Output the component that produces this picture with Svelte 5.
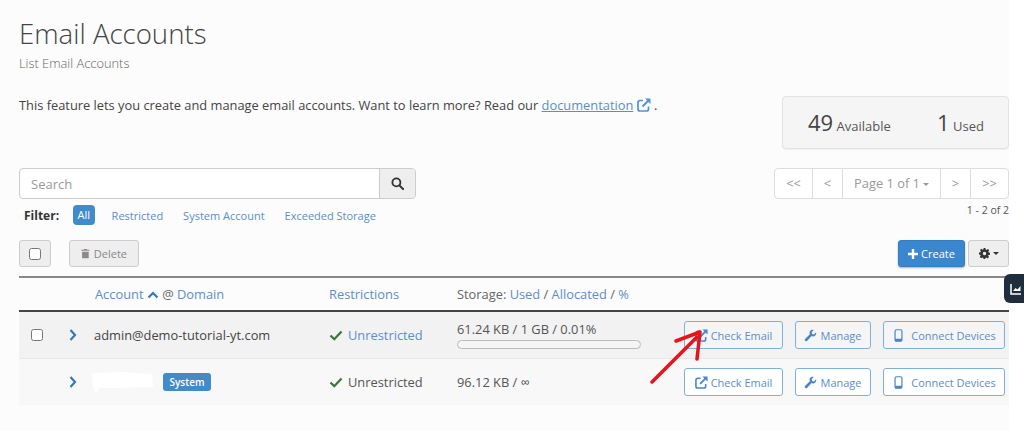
<script>
  const rows = [
    { email: 'admin@demo-tutorial-yt.com', selectable: true, link: true, usage: '61.24 KB / 1 GB / 0.01%', meter: true },
    { email: '', system: true, selectable: false, link: false, usage: '96.12 KB / ∞', meter: false }
  ]
  const filters = ['Restricted', 'System Account', 'Exceeded Storage']
</script>

{#snippet extIcon()}
  <svg class="ico" viewBox="0 0 14 14"><path d="M11.500 8.500v2.500a2 2 0 0 1-2 2H3a2 2 0 0 1-2-2V4.500a2 2 0 0 1 2-2h3" fill="none" stroke="currentColor" stroke-width="1.700"/><path d="M5.500 8.500L11.500 2.500" stroke="currentColor" stroke-width="2"/><path d="M8 .5h5.500V6z" fill="currentColor"/></svg>
{/snippet}
{#snippet wrench()}
  <svg class="ico" viewBox="0 0 14 14"><path d="M13 3.400c.5 1.800-.3 3.600-2 4.300-1 .4-2 .3-2.800-.1L3.500 12.600c-.7.700-1.700.7-2.300.1s-.6-1.600.1-2.300l5-4.700c-.4-.9-.5-1.900-.1-2.800C6.900 1.200 8.700.5 10.500 1L8.300 3.300l.5 2 2 .5z" fill="currentColor"/></svg>
{/snippet}
{#snippet phone()}
  <svg class="ico" viewBox="0 0 14 14"><rect x="3.300" y=".8" width="7.400" height="12.400" rx="1.500" fill="none" stroke="currentColor" stroke-width="1.300"/><rect x="3.300" y="10.500" width="7.400" height="2.700" fill="currentColor"/></svg>
{/snippet}

<div class="page">
  <h1>Email Accounts</h1>
  <div class="subtitle">List Email Accounts</div>

  <div class="intro">
    <p>This feature lets you create and manage email accounts. Want to learn more? Read our <a href="#doc">documentation</a> <span class="doc-icon">{@render extIcon()}</span> .</p>
    <div class="stats">
      <span><b>49</b> Available</span>
      <span><b>1</b> Used</span>
    </div>
  </div>

  <div class="search-row">
    <div class="search-col">
      <div class="search">
        <input placeholder="Search" />
        <button aria-label="Search">
          <svg viewBox="0 0 14 14" width="13" height="13"><circle cx="5.800" cy="5.800" r="4.300" fill="none" stroke="#333" stroke-width="2"/><path d="M9 9l4 4" stroke="#333" stroke-width="2.200" stroke-linecap="round"/></svg>
        </button>
      </div>
      <div class="filters">
        <strong>Filter:</strong>
        <span class="pill">All</span>
        {#each filters as f}<a href="#f">{f}</a>{/each}
      </div>
    </div>
    <div class="pager-col">
      <div class="pager">
        <span class="p1">&lt;&lt;</span><span class="p2">&lt;</span><span class="p3">Page 1 of 1<i class="caret"></i></span><span class="p2">&gt;</span><span class="p1">&gt;&gt;</span>
      </div>
      <div class="count">1 - 2 of 2</div>
    </div>
  </div>

  <div class="toolbar">
    <div class="check-btn"><input type="checkbox" /></div>
    <button class="delete">
      <svg viewBox="0 0 12 13" width="10" height="11"><path d="M4 1.500V.500h4v1h3.500v1.300H.5V1.500zM1.500 4h9v9h-9z" fill="#8a8a8a"/></svg>
      Delete
    </button>
    <button class="create"><svg viewBox="0 0 10 10" width="10" height="10"><path d="M5 0v10M0 5h10" stroke="#fff" stroke-width="2.400"/></svg> Create</button>
    <button class="gear">
      <svg viewBox="0 0 14 14" width="11" height="11"><path d="M5.800 0h2.400l.3 1.900 1.200.5L11.300 1.300 13 3l-1.100 1.600.5 1.200 1.600.3v2.400l-1.900.3-.5 1.200 1.100 1.600-1.700 1.700-1.600-1.100-1.200.5-.3 1.900H5.800l-.3-1.900-1.200-.5L2.700 13 1 11.300l1.100-1.600-.5-1.200L0 8.200V5.800l1.900-.3.500-1.200L1.300 2.700 3 1l1.600 1.100 1.200-.5zM7 4.800a2.200 2.200 0 1 0 0 4.400 2.200 2.200 0 0 0 0-4.400z" fill="#333" fill-rule="evenodd"/></svg>
      <i class="caret dark"></i>
    </button>
  </div>

  <div class="table">
    <div class="row head">
      <div></div>
      <div class="account"><a href="#a">Account</a>
        <svg viewBox="0 0 12 8" width="12" height="8"><path d="M1.500 6.500L6 2l4.500 4.500" fill="none" stroke="#337ab7" stroke-width="2.200"/></svg>
        @ <a href="#d">Domain</a></div>
      <div><a href="#r">Restrictions</a></div>
      <div>Storage: <a href="#u">Used</a> / <a href="#l">Allocated</a> / <a href="#p">%</a></div>
      <div></div>
    </div>
    {#each rows as row, i}
      <div class="row body" class:odd={i === 0}>
        <div class="sel">{#if row.selectable}<input type="checkbox" />{/if}</div>
        <div class="acct">
          <svg class="chev" viewBox="0 0 8 12" width="8" height="12"><path d="M1.500 1l4.500 5-4.500 5" fill="none" stroke="#337ab7" stroke-width="2.200"/></svg>
          {#if row.email}
            <span class="email">{row.email}</span>
          {:else}
            <svg class="blot" viewBox="0 0 64 24" width="64" height="24"><path d="M2 3l30-1 30 2 1 13-40 1-14 0-3 5-3-6z" fill="#fff"/></svg>
            <span class="badge">System</span>
          {/if}
        </div>
        <div class="restr">
          <svg viewBox="0 0 14 11" width="14" height="11"><path d="M1.500 5.500l3.800 3.700 7.200-7.700" fill="none" stroke="#3c763d" stroke-width="2.300"/></svg>
          {#if row.link}<a href="#x">Unrestricted</a>{:else}<span>Unrestricted</span>{/if}
        </div>
        <div class="usage">
          <div>{row.usage}</div>
          {#if row.meter}<div class="meter"></div>{/if}
        </div>
        <div class="actions">
          <button class="act check">{@render extIcon()} Check Email</button>
          <button class="act manage">{@render wrench()} Manage</button>
          <button class="act connect">{@render phone()} Connect Devices</button>
        </div>
      </div>
    {/each}
  </div>
</div>

<svg class="arrow" viewBox="0 0 70 60" width="70" height="60">
  <path d="M2 52L47 7M26 11L50 2 47 29" fill="none" stroke="#e8141c" stroke-width="3.500" stroke-linecap="round" stroke-linejoin="round"/>
</svg>

<div class="chart-tab">
  <svg viewBox="0 0 12 12" width="12" height="12"><path d="M1 1v10h10" fill="none" stroke="#fff" stroke-width="1.500"/><path d="M3 8l2.500-3 2 1.500L10.500 3v5z" fill="#fff"/></svg>
</div>

<style>
  :global(body) {
    background: #fff;
    font-family: "Open Sans", sans-serif;
    overflow: hidden;
  }
  .page {
    box-sizing: border-box;
    width: 1009px;
    height: 431px;
    padding: 15px 0 0 19px;
    background: #fcfcfc;
    color: #333;
    font-size: 12.850px;
  }
  a {
    color: #5b8ecb;
    text-decoration: none;
  }
  h1 {
    margin: 0;
    color: #444;
    font-size: 27.600px;
    font-weight: 300;
    line-height: 36px;
  }
  .subtitle {
    margin-top: 3px;
    color: #666;
    font-weight: 300;
    line-height: 18px;
  }
  .intro {
    display: flex;
    justify-content: space-between;
    align-items: flex-start;
    margin-top: 15px;
  }
  .intro p {
    margin: 9px 0 0;
    line-height: 18px;
    color: #444;
  }
  .intro p a {
    text-decoration: underline;
  }
  .doc-icon :global(.ico) {
    width: 14px;
    height: 14px;
    vertical-align: -2px;
    color: #4f93d8;
  }
  .stats {
    box-sizing: border-box;
    display: flex;
    justify-content: space-between;
    align-items: center;
    width: 227px;
    height: 53px;
    margin-top: 9px;
    padding: 0 24px 2px 25px;
    border: 1px solid #e3e3e3;
    border-radius: 4px;
    background: #f5f5f5;
    box-shadow: 0 1px 1px rgba(0, 0, 0, 0.05);
    color: #555;
    font-size: 13px;
  }
  .stats b {
    font-size: 22px;
    font-weight: 400;
    color: #444;
  }
  .search-row {
    display: flex;
    justify-content: space-between;
    margin-top: 19px;
  }
  .search {
    display: flex;
    box-sizing: border-box;
    width: 397px;
    height: 31px;
    border: 1px solid #ccc;
    border-radius: 4px;
    background: #fff;
  }
  .search input {
    flex: 1;
    min-width: 0;
    padding: 0 11px;
    border: 0;
    border-radius: 4px;
    background: transparent;
    font: 13px "Open Sans", sans-serif;
  }
  .search input::placeholder {
    color: #999;
  }
  .search button {
    display: flex;
    align-items: center;
    justify-content: center;
    width: 36px;
    padding: 0;
    border: 0;
    border-left: 1px solid #ccc;
    border-radius: 0 3px 3px 0;
    background: #eee;
  }
  .filters {
    display: flex;
    align-items: center;
    height: 20px;
    margin: 6px 0 0 5px;
    font-size: 11px;
  }
  .filters strong {
    margin-right: 14px;
    font-weight: 700;
    font-size: 12px;
    color: #333;
  }
  .filters a {
    margin-left: 16px;
    margin-right: 4px;
  }
  .filters .pill + a {
    margin-left: 17px;
  }
  .pill {
    padding: 0 4.500px;
    border-radius: 4px;
    background: #428bca;
    color: #fff;
    line-height: 20px;
  }
  .pager-col {
    display: flex;
    flex-direction: column;
    align-items: flex-end;
  }
  .pager {
    display: flex;
    box-sizing: border-box;
    width: 235px;
    height: 31px;
    border: 1px solid #ddd;
    border-radius: 4px;
    background: #fff;
    color: #999;
    line-height: 29px;
    text-align: center;
  }
  .pager span {
    flex: none;
    border-left: 1px solid #ddd;
  }
  .pager span:first-child {
    border-left: 0;
  }
  .p1 { width: 37px; }
  .p2 { width: 29px; }
  .p3 { width: 97px; }
  .caret {
    display: inline-block;
    margin-left: 3px;
    vertical-align: 2px;
    border-top: 3.500px solid #999;
    border-left: 3.500px solid transparent;
    border-right: 3.500px solid transparent;
  }
  .caret.dark {
    border-top-color: #333;
  }
  .count {
    margin-top: 4px;
    color: #555;
    font-size: 10.500px;
    line-height: 15px;
  }
  .toolbar {
    display: flex;
    align-items: flex-start;
    height: 27px;
    margin-top: 15px;
  }
  .check-btn {
    box-sizing: border-box;
    display: flex;
    align-items: center;
    justify-content: center;
    width: 32px;
    height: 27px;
    border: 1px solid #ccc;
    border-radius: 3px;
    background: #eee;
  }
  input[type="checkbox"] {
    width: 12px;
    height: 12px;
    margin: 0;
  }
  .delete {
    display: flex;
    align-items: center;
    gap: 4px;
    box-sizing: border-box;
    width: 70px;
    height: 27px;
    margin-left: 18px;
    padding: 0 11px;
    border: 1px solid #ccc;
    border-radius: 3px;
    background: #eee;
    color: #888;
    font: 11px "Open Sans", sans-serif;
  }
  .create {
    display: flex;
    align-items: center;
    justify-content: center;
    gap: 3px;
    box-sizing: border-box;
    width: 67px;
    height: 27px;
    margin-left: auto;
    border: 1px solid #357ebd;
    border-radius: 3px;
    background: #3a87cf;
    box-shadow: 0 1px 2px rgba(0, 0, 0, 0.3);
    color: #fff;
    font: 11px "Open Sans", sans-serif;
  }
  .gear {
    display: flex;
    align-items: center;
    justify-content: center;
    box-sizing: border-box;
    width: 41px;
    height: 27px;
    margin-left: 3px;
    padding: 0;
    border: 1px solid #ccc;
    border-radius: 3px;
    background: #eee;
  }
  .table {
    margin-top: 9px;
  }
  .row {
    display: grid;
    grid-template-columns: 76px 234px 128px 227px 1fr;
    align-items: center;
    box-sizing: border-box;
  }
  .head {
    height: 36px;
    border-top: 2px solid #888;
    border-bottom: 2px solid #444;
    color: #666;
  }
  .account {
    white-space: nowrap;
  }
  .body {
    height: 47px;
    border-bottom: 1px solid #e8e8e8;
    grid-template-columns: 40px 270px 128px 227px 1fr;
    background: #f8f8f8;
    color: #555;
  }
  .body:last-child {
    border-bottom: 0;
    height: 46px;
  }
  .odd {
    background: #f2f2f2;
  }
  .sel {
    display: flex;
    padding-left: 12px;
  }
  .acct {
    display: flex;
    align-items: center;
  }
  .chev {
    margin-left: 10px;
    margin-right: 17px;
    flex: none;
  }
  .email {
    color: #444;
  }
  .blot {
    margin-left: -4px;
    margin-right: 9px;
  }
  .badge {
    padding: 0 6.500px;
    border-radius: 3px;
    background: #428bca;
    color: #fff;
    font-size: 10px;
    font-weight: 600;
    line-height: 18px;
  }
  .restr {
    display: flex;
    align-items: center;
    gap: 5px;
  }
  .usage {
    line-height: 15px;
  }
  .meter {
    box-sizing: border-box;
    width: 184px;
    height: 9px;
    margin-top: 3px;
    border: 1px solid #bbb;
    border-radius: 5px;
    background: #f5f5f5;
  }
  .actions {
    display: flex;
    gap: 12px;
  }
  .act {
    display: flex;
    align-items: center;
    justify-content: center;
    gap: 3px;
    box-sizing: border-box;
    height: 28px;
    padding: 0;
    border: 1px solid #7fb0dc;
    border-radius: 3px;
    background: #fff;
    color: #5b8ecb;
    font: 11px "Open Sans", sans-serif;
  }
  .odd .act {
    background: #f5f5f5;
  }
  .check { width: 99px; }
  .manage { width: 76px; }
  .connect { width: 122px; gap: 6px; }
  .ico {
    width: 13px;
    height: 13px;
    color: #4a86c5;
  }
  .arrow {
    position: absolute;
    left: 650px;
    top: 330px;
  }
  .chart-tab {
    position: absolute;
    left: 1004px;
    top: 274px;
    display: flex;
    align-items: center;
    justify-content: center;
    width: 24px;
    height: 29px;
    border-radius: 6px 0 0 6px;
    background: #1f2d3d;
  }
</style>
